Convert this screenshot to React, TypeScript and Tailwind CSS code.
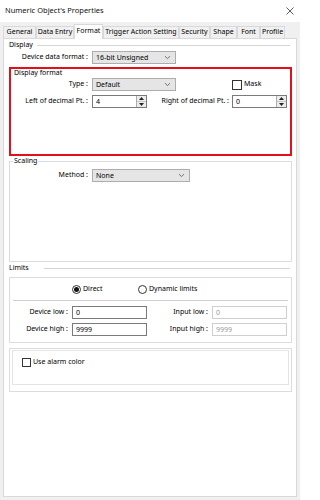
import React from "react";

const Chevron = () => (
  <svg width="7" height="5" viewBox="0 0 7 5" className="shrink-0">
    <path d="M1 1.2 L3.5 3.6 L6 1.2" fill="none" stroke="#555" strokeWidth="0.8" />
  </svg>
);

function Select({ w, value }: { w: string; value: string }) {
  return (
    <div className={`h-[13px] ${w} bg-[#e5e5e5] border border-[#adadad] flex items-center justify-between pl-[3px] pr-[4px] shrink-0`}>
      <span className="leading-none">{value}</span>
      <Chevron />
    </div>
  );
}

function SpinInput({ value }: { value: string }) {
  return (
    <div className="h-[13px] w-[55px] border border-[#7a7a7a] bg-white flex items-stretch shrink-0">
      <div className="flex-1 flex items-center pl-[3px] leading-none">{value}</div>
      <div className="w-[10px] border-l border-[#adadad] bg-[#ececec] flex flex-col">
        <div className="flex-1 flex items-center justify-center border-b border-[#c8c8c8]">
          <svg width="5" height="3" viewBox="0 0 5 3"><path d="M0 3 L2.5 0 L5 3Z" fill="#222" /></svg>
        </div>
        <div className="flex-1 flex items-center justify-center">
          <svg width="5" height="3" viewBox="0 0 5 3"><path d="M0 0 L2.5 3 L5 0Z" fill="#222" /></svg>
        </div>
      </div>
    </div>
  );
}

function TextInput({ value, disabled }: { value: string; disabled?: boolean }) {
  return (
    <div
      className={
        disabled
          ? "h-[13px] w-[75px] border border-[#cfcfcf] bg-white flex items-center pl-[3px] leading-none text-[#9a9a9a] shrink-0"
          : "h-[13px] w-[75px] border border-[#7a7a7a] bg-white flex items-center pl-[3px] leading-none shrink-0"
      }
    >
      {value}
    </div>
  );
}

const tabs: { label: string; w: string; active?: boolean }[] = [
  { label: "General", w: "w-[33px]" },
  { label: "Data Entry", w: "w-[38px]" },
  { label: "Format", w: "w-[29px]", active: true },
  { label: "Trigger Action Setting", w: "w-[76px]" },
  { label: "Security", w: "w-[31px]" },
  { label: "Shape", w: "w-[27px]" },
  { label: "Font", w: "w-[23px]" },
  { label: "Profile", w: "w-[25px]" },
];

export default function App() {
  return (
    <div className="w-[300px] h-[500px] bg-[#f0f0f0] flex flex-col overflow-hidden text-[7px] text-black font-['Noto_Sans','Open_Sans',sans-serif]">
      {/* title bar */}
      <div className="h-[22px] bg-white flex items-center justify-between pl-[5px] pr-[6px] shrink-0">
        <span className="text-[7.5px] text-[#111]">Numeric Object's Properties</span>
        <svg width="8" height="8" viewBox="0 0 8 8">
          <path d="M0.5 0.5 L7.5 7.5 M7.5 0.5 L0.5 7.5" stroke="#333" strokeWidth="0.8" />
        </svg>
      </div>

      {/* tabs */}
      <div className="h-[15px] mt-[2px] flex items-end pl-[3px] relative z-10 shrink-0">
        {tabs.map((t) =>
          t.active ? (
            <div
              key={t.label}
              className={`${t.w} h-[15px] bg-white border-l border-t border-r border-[#d9d9d9] flex items-center justify-center pb-[1px] whitespace-nowrap`}
            >
              {t.label}
            </div>
          ) : (
            <div
              key={t.label}
              className={`${t.w} h-[12px] mb-[1px] bg-[#f0f0f0] border-l border-t border-r border-[#d9d9d9] flex items-center justify-center whitespace-nowrap`}
            >
              {t.label}
            </div>
          )
        )}
      </div>

      {/* panel */}
      <div className="flex-1 mx-[3px] mb-[3px] -mt-px bg-white border border-[#d9d9d9] flex flex-col">
        {/* Display header */}
        <div className="h-[12px] flex items-center pl-[5px] pr-[6px]">
          <span>Display</span>
          <div className="flex-1 h-px bg-[#d5d5d5] ml-[4px]" />
        </div>
        <div className="h-[13px] flex items-center">
          <div className="w-[84px] text-right whitespace-nowrap">Device data format :</div>
          <div className="ml-[4px]">
            <Select w="w-[84px]" value="16-bit Unsigned" />
          </div>
        </div>

        {/* Display format (highlighted) */}
        <div className="mt-[3px] ml-[5px] w-[283px] h-[89px] border-2 border-[#e3101c] flex flex-col">
          <div className="h-[9px] pl-[3px] flex items-center">Display format</div>
          <div className="h-[13px] flex items-center">
            <div className="w-[77px] text-right whitespace-nowrap">Type :</div>
            <div className="ml-[4px]">
              <Select w="w-[84px]" value="Default" />
            </div>
            <div className="ml-[56px] w-[10px] h-[10px] border border-[#333] bg-white" />
            <span className="ml-[2px]">Mask</span>
          </div>
          <div className="h-[13px] mt-[4px] flex items-center">
            <div className="w-[77px] text-right whitespace-nowrap">Left of decimal Pt. :</div>
            <div className="ml-[4px]">
              <SpinInput value="4" />
            </div>
            <div className="w-[82px] text-right whitespace-nowrap">Right of decimal Pt. :</div>
            <div className="ml-[3px]">
              <SpinInput value="0" />
            </div>
          </div>
        </div>

        {/* Scaling */}
        <fieldset className="ml-[5px] w-[283px] h-[106px] border border-[#dcdcdc]">
          <legend className="ml-[3px] px-[1px] leading-[10px]">Scaling</legend>
          <div className="mt-[3px] h-[13px] flex items-center">
            <div className="w-[78px] text-right whitespace-nowrap">Method :</div>
            <div className="ml-[4px]">
              <Select w="w-[98px]" value="None" />
            </div>
          </div>
        </fieldset>

        {/* Limits header */}
        <div className="h-[13px] flex items-center pl-[5px] pr-[6px]">
          <span>Limits</span>
          <div className="flex-1 h-px bg-[#d5d5d5] ml-[15px]" />
        </div>

        <div className="mt-[2px] ml-[5px] w-[283px] border border-[#dcdcdc] pb-[6px] flex flex-col">
          <div className="h-[22px] flex items-center pl-[62px]">
            <div className="w-[66px] flex items-center">
              <div className="w-[9px] h-[9px] rounded-full border border-[#333] bg-white flex items-center justify-center">
                <div className="w-[5px] h-[5px] rounded-full bg-[#111]" />
              </div>
              <span className="ml-[2px]">Direct</span>
            </div>
            <div className="flex items-center">
              <div className="w-[9px] h-[9px] rounded-full border border-[#333] bg-white" />
              <span className="ml-[2px]">Dynamic limits</span>
            </div>
          </div>
          <div className="mx-[3px] h-px bg-[#d0d0d0]" />
          <div className="mt-[5px] h-[13px] flex items-center">
            <div className="w-[58px] text-right whitespace-nowrap">Device low :</div>
            <div className="ml-[4px]">
              <TextInput value="0" />
            </div>
            <div className="w-[61px] text-right whitespace-nowrap">Input low :</div>
            <div className="ml-[4px]">
              <TextInput value="0" disabled />
            </div>
          </div>
          <div className="mt-[4px] h-[13px] flex items-center">
            <div className="w-[58px] text-right whitespace-nowrap">Device high :</div>
            <div className="ml-[4px]">
              <TextInput value="9999" />
            </div>
            <div className="w-[61px] text-right whitespace-nowrap">Input high :</div>
            <div className="ml-[4px]">
              <TextInput value="9999" disabled />
            </div>
          </div>
        </div>

        <div className="mt-[5px] ml-[5px] w-[283px] border border-[#dcdcdc] pt-px px-[2px] pb-[6px]">
          <div className="h-[35px] border border-[#e4e4e4] pt-[6px] pl-[9px]">
            <div className="flex items-center">
              <div className="w-[9px] h-[9px] border border-[#333] bg-white" />
              <span className="ml-[2px]">Use alarm color</span>
            </div>
          </div>
        </div>
      </div>
    </div>
  );
}
